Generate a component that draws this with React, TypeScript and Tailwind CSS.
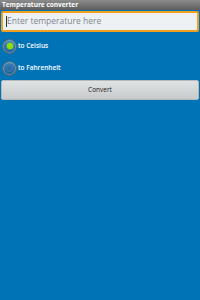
import { useState } from 'react';

export default function App() {
  const [unit, setUnit] = useState<'c' | 'f'>('c');
  const [value, setValue] = useState('');

  return (
    <main className="w-[200px] h-[300px] bg-[#0072b6] flex flex-col font-['Open_Sans',sans-serif]">
      <header className="h-[10px] bg-gradient-to-b from-[#8c8c8c] to-[#5e5e5e] flex items-center px-[2px]">
        <span className="text-[6.5px] leading-none font-bold text-white">Temperature converter</span>
      </header>

      <div className="mx-[1px] mt-[1px] h-[21px] rounded-[2px] border-2 border-[#f0a020] bg-[#eef1f4] flex items-center px-[3px]">
        <div className="w-[1px] h-[11px] bg-[#333]" />
        <input
          value={value}
          onChange={(e) => setValue(e.target.value)}
          placeholder="Enter temperature here"
          className="flex-1 min-w-0 bg-transparent outline-none text-[8.5px] text-[#333] placeholder:text-[#80868c]"
        />
      </div>

      <div className="flex flex-col mt-[3px]">
        <Radio label="to Celsius" checked={unit === 'c'} onClick={() => setUnit('c')} />
        <Radio label="to Fahrenheit" checked={unit === 'f'} onClick={() => setUnit('f')} />
      </div>

      <button className="mx-[1px] mt-[1px] h-[20px] rounded-[2px] bg-gradient-to-b from-[#dfe2e3] to-[#c7cbcc] border border-[#b5b9ba] text-[6.5px] text-[#222]">
        Convert
      </button>
    </main>
  );
}

function Radio({ label, checked, onClick }: { label: string; checked: boolean; onClick: () => void }) {
  return (
    <button onClick={onClick} className="flex items-center h-[22px] pl-[2px] gap-[1px] text-left">
      <span className="w-[15px] h-[15px] rounded-full border border-[#5a6a78] bg-gradient-to-b from-[#3a82b8] to-[#1d5f92] flex items-center justify-center shadow-[inset_0_0_0_1px_rgba(255,255,255,0.3)]">
        {checked ? (
          <span className="w-[6px] h-[6px] rounded-full bg-[#8ee000] shadow-[0_0_2px_#b8ff40]" />
        ) : (
          <span className="w-[7px] h-[7px] rounded-full bg-[#2a6da2] border border-[#3d7eb0]" />
        )}
      </span>
      <span className="text-[6.5px] font-semibold text-white">{label}</span>
    </button>
  );
}
